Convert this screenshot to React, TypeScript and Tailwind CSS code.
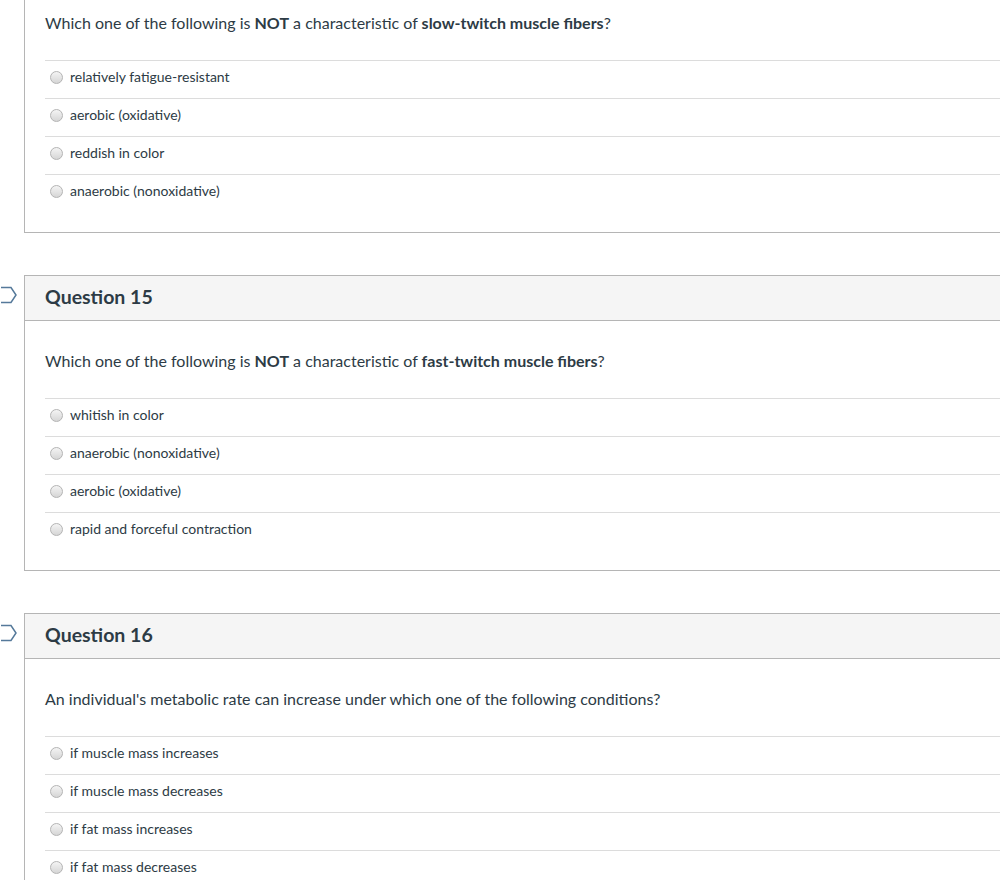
const questions = [
  {
    id: 14,
    text: (
      <>
        Which one of the following is <b>NOT</b> a characteristic of{" "}
        <b>slow-twitch muscle fibers</b>?
      </>
    ),
    answers: [
      "relatively fatigue-resistant",
      "aerobic (oxidative)",
      "reddish in color",
      "anaerobic (nonoxidative)",
    ],
  },
  {
    id: 15,
    text: (
      <>
        Which one of the following is <b>NOT</b> a characteristic of{" "}
        <b>fast-twitch muscle fibers</b>?
      </>
    ),
    answers: [
      "whitish in color",
      "anaerobic (nonoxidative)",
      "aerobic (oxidative)",
      "rapid and forceful contraction",
    ],
  },
  {
    id: 16,
    text: (
      <>
        An individual's metabolic rate can increase under which one of the
        following conditions?
      </>
    ),
    answers: [
      "if muscle mass increases",
      "if muscle mass decreases",
      "if fat mass increases",
      "if fat mass decreases",
    ],
  },
];

function Flag() {
  return (
    <svg
      className="absolute left-[-24px] top-[10px]"
      width="18"
      height="18"
      viewBox="0 0 18 18"
    >
      <path
        d="M-3 1.5 H10 L15 9 L10 16.5 H-3 Z"
        fill="none"
        stroke="#55799a"
        strokeWidth="1.5"
      />
    </svg>
  );
}

function Radio() {
  return (
    <span className="w-[13px] h-[13px] rounded-full border border-[#b4b4b4] bg-linear-to-b from-[#f4f4f4] to-[#d6d6d6] shrink-0" />
  );
}

function Question({ q, first }: { q: (typeof questions)[number]; first?: boolean }) {
  return (
    <div
      className={
        first
          ? "ml-[24px] w-[1040px] border border-t-0 border-[#b5b5b5] mt-[-17px]"
          : "ml-[24px] w-[1040px] border border-[#b5b5b5] mt-[42px]"
      }
    >
      {!first && (
        <div className="relative h-[45px] bg-[#f5f5f5] border-b border-[#b5b5b5] flex items-center pl-[20px] pb-[2px]">
          <Flag />
          <h2 className="text-[19.5px] font-bold text-[#2d3b45]">Question {q.id}</h2>
        </div>
      )}
      <div className="pl-[20px] pt-[29px] pb-[20px]">
        <p className="text-[16px] leading-[22px] text-[#2d3b45] mb-[26px]">{q.text}</p>
        {q.answers.map((a) => (
          <div
            key={a}
            className="h-[38px] border-t border-[#dcdcdc] flex items-center pl-[5px] pb-[5px] gap-[7px]"
          >
            <Radio />
            <span className="text-[14px] leading-[18px] text-[#2d3b45]">{a}</span>
          </div>
        ))}
      </div>
    </div>
  );
}

export default function App() {
  return (
    <div
      className="w-[1000px] h-[880px] overflow-hidden bg-white"
      style={{ fontFamily: "Lato, 'Open Sans', sans-serif" }}
    >
      {questions.map((q, i) => (
        <Question key={q.id} q={q} first={i === 0} />
      ))}
    </div>
  );
}
